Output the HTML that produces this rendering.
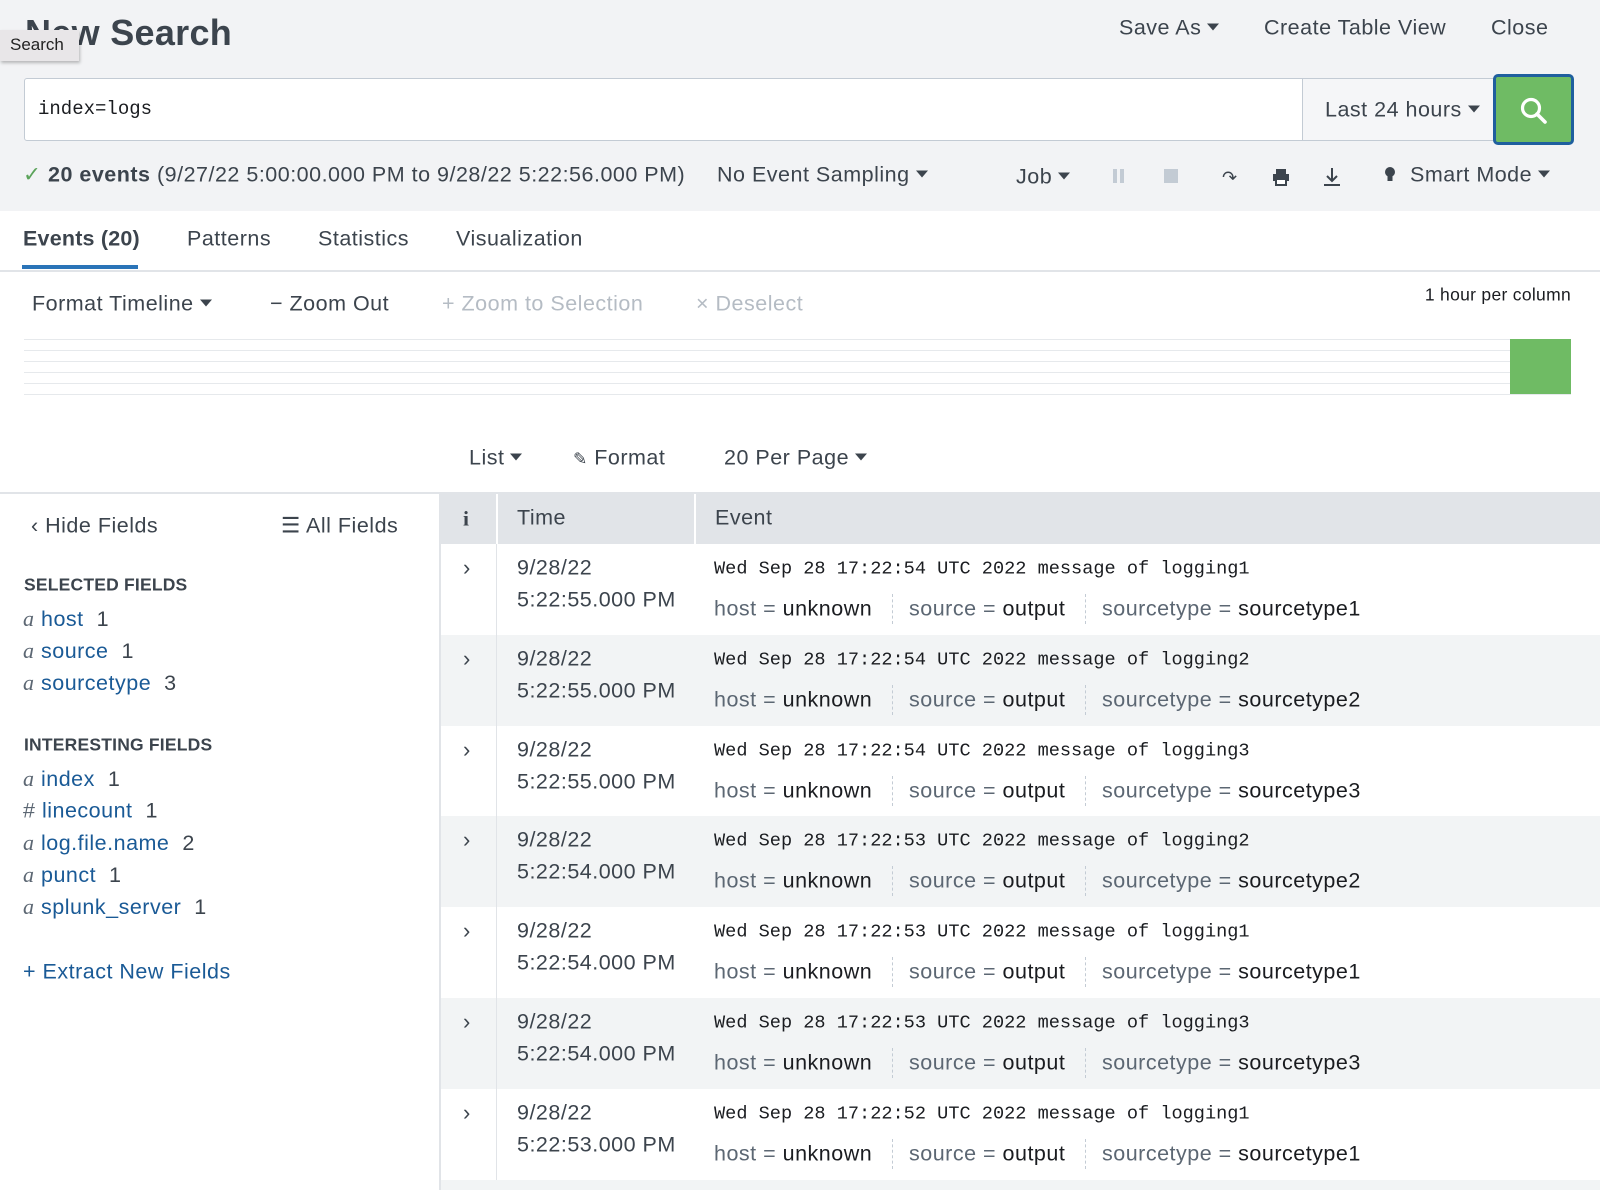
<!DOCTYPE html>
<html style="overflow:hidden;height:1190px"><head><meta charset="utf-8"><style>
*{margin:0;padding:0;box-sizing:border-box}
html,body{overflow:hidden}
body{width:1600px;height:1190px;overflow:hidden;background:#fff;font-family:"Liberation Sans",sans-serif;color:#3c444d;font-size:21.5px;letter-spacing:0.5px;position:relative}
.a{position:absolute;white-space:nowrap}
.c{transform:translateY(-50%)}
.tri{display:inline-block;width:0;height:0;border-left:6px solid transparent;border-right:6px solid transparent;border-top:7px solid #3c444d;vertical-align:middle;margin-left:6px;position:relative;top:-2px}
.mono{font-family:"Liberation Mono",monospace;font-size:18.6px;color:#1a1c20;letter-spacing:0}
.k{color:#5c6773}.v{color:#1a1c20}
.sep{position:absolute;width:0;border-left:1px dashed #c3cbd4;height:30px}
.lnk{color:#1a5a96}
.ai{font-family:"Liberation Serif",serif;font-style:italic;color:#5c6773;font-size:22px}
.row{position:absolute;left:441px;width:1159px;height:91px}
.g{background:#f2f4f5}
</style></head><body>
<div class="a" style="left:0;top:0;width:1600px;height:211px;background:#f2f3f5"></div>
<div class="a" style="left:25px;top:12px;font-size:36px;font-weight:bold;color:#3c444d;letter-spacing:0.3px">New Search</div>
<div class="a" style="left:0;top:30px;width:79px;height:31px;background:#e8e6e8;box-shadow:1px 2px 3px rgba(0,0,0,.25);font-size:17px;letter-spacing:0;color:#222;padding:5px 0 0 10px">Search</div>
<div class="a c" style="left:1119px;top:28px">Save As<span class="tri"></span></div>
<div class="a c" style="left:1264px;top:28px">Create Table View</div>
<div class="a c" style="left:1491px;top:28px">Close</div>
<div class="a" style="left:24px;top:78px;width:1280px;height:63px;background:#fff;border:1px solid #c3cbd4;border-radius:3px 0 0 3px"></div>
<div class="a c" style="left:38px;top:109px;font-family:'Liberation Mono',monospace;font-size:19px;letter-spacing:0;color:#1a1c20">index=logs</div>
<div class="a" style="left:1302px;top:78px;width:192px;height:63px;background:#f5f6f8;border:1px solid #c3cbd4"></div>
<div class="a c" style="left:1325px;top:110px">Last 24 hours<span class="tri"></span></div>
<div class="a" style="left:1493px;top:74px;width:81px;height:71px;background:#6fbb64;border:3px solid #1f5f9e;border-radius:5px"></div>
<svg class="a" style="left:1519px;top:96px" width="30" height="30" viewBox="0 0 30 30"><circle cx="12" cy="12" r="8.5" fill="none" stroke="#fff" stroke-width="3.2"/><path d="M18 18l8 8" stroke="#fff" stroke-width="3.6" stroke-linecap="round"/></svg>
<div class="a c" style="left:23px;top:175px"><span style="color:#5ba35a">✓</span> <b>20 events</b> (9/27/22 5:00:00.000 PM to 9/28/22 5:22:56.000 PM)</div>
<div class="a c" style="left:717px;top:175px">No Event Sampling<span class="tri"></span></div>
<div class="a c" style="left:1016px;top:177px">Job<span class="tri"></span></div>
<div class="a" style="left:1113px;top:169px;width:4px;height:14px;background:#c3cbd4"></div><div class="a" style="left:1120px;top:169px;width:4px;height:14px;background:#c3cbd4"></div>
<div class="a" style="left:1164px;top:169px;width:14px;height:14px;background:#c3cbd4"></div>
<div class="a c" style="left:1222px;top:178px;font-size:18px">↷</div>
<svg class="a" style="left:1272px;top:168px" width="18" height="18" viewBox="0 0 18 18"><rect x="4" y="1" width="10" height="5" fill="#3c444d"/><rect x="1" y="6" width="16" height="7" fill="#3c444d"/><rect x="4" y="11" width="10" height="6" fill="#fff" stroke="#3c444d" stroke-width="2"/></svg>
<svg class="a" style="left:1323px;top:167px" width="18" height="20" viewBox="0 0 18 20"><path d="M9 1v13M4 9l5 5 5-5M1 18h16" fill="none" stroke="#3c444d" stroke-width="2"/></svg>
<svg class="a" style="left:1384px;top:166px" width="12" height="18" viewBox="0 0 12 18"><circle cx="6" cy="6" r="5" fill="#3c444d"/><rect x="3.5" y="9" width="5" height="6" fill="#3c444d"/></svg>
<div class="a c" style="left:1410px;top:175px">Smart Mode<span class="tri"></span></div>
<div class="a c" style="left:23px;top:239px;font-weight:bold;letter-spacing:0.2px">Events (20)</div>
<div class="a c" style="left:187px;top:239px">Patterns</div>
<div class="a c" style="left:318px;top:239px">Statistics</div>
<div class="a c" style="left:456px;top:239px">Visualization</div>
<div class="a" style="left:0;top:270px;width:1600px;height:2px;background:#e1e4e8"></div>
<div class="a" style="left:22px;top:265px;width:116px;height:4px;background:#2a74b8"></div>
<div class="a c" style="left:32px;top:304px">Format Timeline<span class="tri"></span></div>
<div class="a c" style="left:270px;top:304px">− Zoom Out</div>
<div class="a c" style="left:442px;top:304px;color:#b5bcc4">+ Zoom to Selection</div>
<div class="a c" style="left:696px;top:304px;color:#b5bcc4">× Deselect</div>
<div class="a c" style="right:29px;top:295px;font-size:17.5px;letter-spacing:0.3px;color:#1a1c20">1 hour per column</div>
<div class="a" style="left:24px;top:339px;width:1547px;height:1px;background:#e6e9ec"></div>
<div class="a" style="left:24px;top:350px;width:1547px;height:1px;background:#e6e9ec"></div>
<div class="a" style="left:24px;top:361px;width:1547px;height:1px;background:#e6e9ec"></div>
<div class="a" style="left:24px;top:372px;width:1547px;height:1px;background:#e6e9ec"></div>
<div class="a" style="left:24px;top:383px;width:1547px;height:1px;background:#e6e9ec"></div>
<div class="a" style="left:24px;top:394px;width:1547px;height:1px;background:#e6e9ec"></div>
<div class="a" style="left:1510px;top:339px;width:61px;height:55px;background:#6fbb64"></div>
<div class="a c" style="left:469px;top:458px">List<span class="tri"></span></div>
<div class="a c" style="left:573px;top:458px"><span style="font-size:17px">✎</span> Format</div>
<div class="a c" style="left:724px;top:458px">20 Per Page<span class="tri"></span></div>
<div class="a" style="left:0;top:492px;width:1600px;height:2px;background:#e1e4e8"></div>
<div class="a" style="left:439px;top:494px;width:2px;height:696px;background:#e1e4e8"></div>
<div class="a c" style="left:31px;top:526px">‹ Hide Fields</div>
<div class="a c" style="left:281px;top:526px">☰ All Fields</div>
<div class="a c" style="left:24px;top:585px;font-size:17.5px;font-weight:bold;letter-spacing:0.2px">SELECTED FIELDS</div>
<div class="a c" style="left:23px;top:619px"><span class="ai">a</span> <span class="lnk">host</span>&nbsp; 1</div>
<div class="a c" style="left:23px;top:651px"><span class="ai">a</span> <span class="lnk">source</span>&nbsp; 1</div>
<div class="a c" style="left:23px;top:683px"><span class="ai">a</span> <span class="lnk">sourcetype</span>&nbsp; 3</div>
<div class="a c" style="left:24px;top:745px;font-size:17.5px;font-weight:bold;letter-spacing:0.2px">INTERESTING FIELDS</div>
<div class="a c" style="left:23px;top:779px"><span class="ai">a</span> <span class="lnk">index</span>&nbsp; 1</div>
<div class="a c" style="left:23px;top:811px"><span style="color:#5c6773">#</span> <span class="lnk">linecount</span>&nbsp; 1</div>
<div class="a c" style="left:23px;top:843px"><span class="ai">a</span> <span class="lnk">log.file.name</span>&nbsp; 2</div>
<div class="a c" style="left:23px;top:875px"><span class="ai">a</span> <span class="lnk">punct</span>&nbsp; 1</div>
<div class="a c" style="left:23px;top:907px"><span class="ai">a</span> <span class="lnk">splunk_server</span>&nbsp; 1</div>
<div class="a c" style="left:23px;top:972px"><span class="lnk">+ Extract New Fields</span></div>
<div class="a" style="left:441px;top:494px;width:1159px;height:50px;background:#e1e4e8"></div>
<div class="a" style="left:496px;top:494px;width:2px;height:50px;background:#fff"></div>
<div class="a" style="left:694px;top:494px;width:2px;height:50px;background:#fff"></div>
<div class="a c" style="left:463px;top:519px;font-family:'Liberation Serif',serif;font-weight:bold">i</div>
<div class="a c" style="left:517px;top:518px">Time</div>
<div class="a c" style="left:715px;top:518px">Event</div>
<div id="rows"></div>
<script>
var d=[["54","1","55"],["54","2","55"],["54","3","55"],["53","2","54"],["53","1","54"],["53","3","54"],["52","1","53"]];
var h="";
for(var i=0;i<8;i++){var t=544+i*90.8;var r=d[i]||["52","1","53"];
h+='<div class="row'+(i%2?' g':'')+'" style="top:'+t+'px;'+(i==7?'height:10px':'')+'"></div>';
if(i==7)break;
h+='<div class="a" style="left:496px;top:'+t+'px;width:1px;height:91px;background:#e1e4e8"></div>';
h+='<div class="a c" style="left:463px;top:'+(t+24)+'px;font-size:22px">›</div>';
h+='<div class="a c" style="left:517px;top:'+(t+24)+'px">9/28/22</div>';
h+='<div class="a c" style="left:517px;top:'+(t+56)+'px">5:22:'+r[2]+'.000 PM</div>';
h+='<div class="a c mono" style="left:714px;top:'+(t+25)+'px">Wed Sep 28 17:22:'+r[0]+' UTC 2022 message of logging'+r[1]+'</div>';
h+='<div class="a c" style="left:714px;top:'+(t+65)+'px"><span class="k">host = </span><span class="v">unknown</span></div>';
h+='<div class="sep" style="left:892px;top:'+(t+50)+'px"></div>';
h+='<div class="a c" style="left:909px;top:'+(t+65)+'px"><span class="k">source = </span><span class="v">output</span></div>';
h+='<div class="sep" style="left:1085px;top:'+(t+50)+'px"></div>';
h+='<div class="a c" style="left:1102px;top:'+(t+65)+'px"><span class="k">sourcetype = </span><span class="v">sourcetype'+r[1]+'</span></div>';}
document.getElementById("rows").innerHTML=h;
</script>
</body></html>
